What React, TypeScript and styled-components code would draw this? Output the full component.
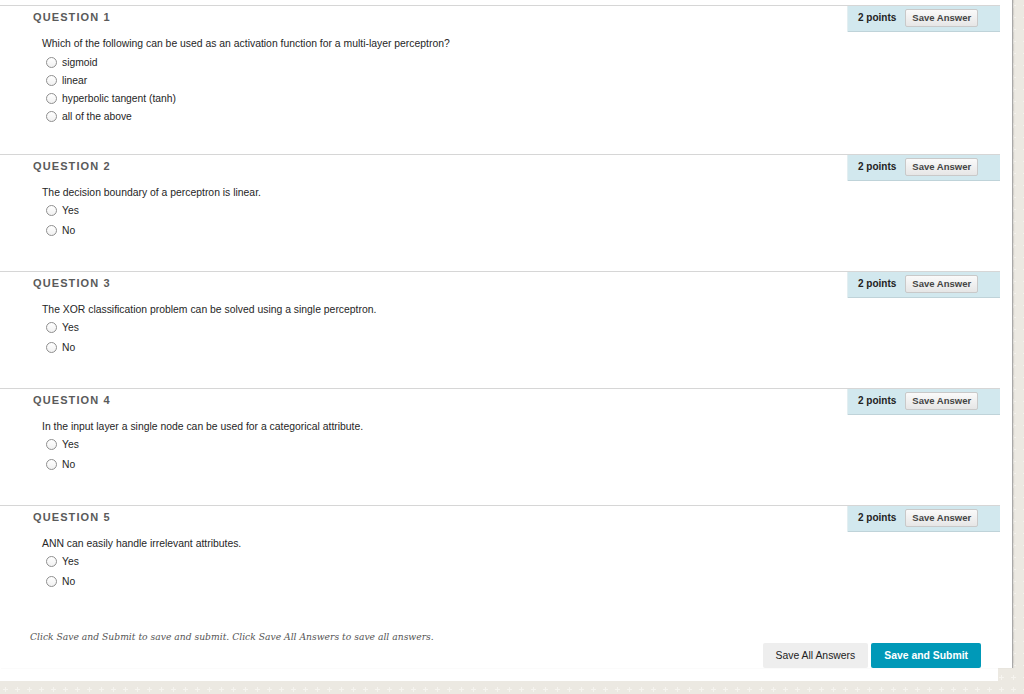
import styled, { createGlobalStyle } from 'styled-components';

const GlobalStyle = createGlobalStyle`
  html, body {
    margin: 0;
    padding: 0;
  }
  body {
    font-family: "Liberation Sans", Arial, sans-serif;
    background-color: #ece9e2;
    background-image:
      linear-gradient(180deg, #ece9e2 3px, transparent 3px, transparent 8px, #ece9e2 8px),
      linear-gradient(90deg, #ece9e2 3px, transparent 3px, transparent 8px, #ece9e2 8px),
      linear-gradient(90deg, transparent 5px, #f6f4ef 5px, #f6f4ef 6px, transparent 6px),
      linear-gradient(180deg, transparent 5px, #f6f4ef 5px, #f6f4ef 6px, transparent 6px);
    background-size: 12px 12px;
    min-height: 694px;
    overflow: hidden;
  }
`;

const Page = styled.div`
  width: 998px;
  background: #fff;
  padding-bottom: 13px;
`;

const Panel = styled.div`
  width: 1013px;
  height: 668px;
  box-sizing: border-box;
  background: #fff;
  border-right: 1px solid #a9a9a9;
  box-shadow: 1px 0 1px rgba(0, 0, 0, 0.1);
  padding-top: 5px;
`;

const Questions = styled.div`
  width: 1000px;
`;

const Block = styled.section<{ $height: number }>`
  height: ${(p) => p.$height}px;
  box-sizing: border-box;
  border-top: 1px solid #d6d6d6;
`;

const HeaderRow = styled.div`
  display: flex;
  align-items: stretch;
  justify-content: space-between;
  height: 26px;
`;

const Title = styled.h3`
  margin: 0;
  padding-left: 33px;
  font-size: 11px;
  font-weight: bold;
  letter-spacing: 1.1px;
  color: #5a5a5a;
  line-height: 22px;
`;

const PointsBox = styled.div`
  display: flex;
  align-items: center;
  gap: 9px;
  width: 152px;
  box-sizing: border-box;
  padding-left: 10px;
  background: #d2e8ee;
  border-bottom: 1px solid #bfd3d9;
  box-shadow: -1px 0 0 #e3eef1;
`;

const Points = styled.span`
  font-size: 10px;
  font-weight: bold;
  color: #222;
  margin-top: -3px;
`;

const SaveAnswerButton = styled.button`
  height: 18px;
  padding: 0 6px;
  margin-top: -2px;
  border: 1px solid #c9c9c9;
  border-radius: 2px;
  background: linear-gradient(#fafafa, #e6e6e6);
  font-family: "Liberation Sans", Arial, sans-serif;
  font-size: 9.5px;
  font-weight: bold;
  color: #444;
  cursor: pointer;
`;

const Body = styled.div`
  padding-left: 42px;
  padding-top: 3px;
`;

const Prompt = styled.p`
  margin: 0;
  font-size: 10.4px;
  line-height: 18px;
  color: #262626;
`;

const OptionList = styled.div<{ $row: number; $shift: number }>`
  display: flex;
  flex-direction: column;
  margin-top: ${(p) => p.$shift}px;
  & > label {
    height: ${(p) => p.$row}px;
  }
`;

const Option = styled.label`
  display: flex;
  align-items: center;
  gap: 5px;
  padding-left: 4px;
  font-size: 10.3px;
  color: #262626;
  cursor: pointer;
`;

const Radio = styled.span`
  width: 11px;
  height: 11px;
  border-radius: 50%;
  border: 1px solid #8f8f8f;
  background: linear-gradient(#fff, #f1f1f1);
  box-sizing: border-box;
`;

const Footer = styled.div`
  display: flex;
  flex-direction: column;
  padding-top: 8px;
`;

const Note = styled.p`
  margin: 0;
  padding-left: 30px;
  font-family: "DejaVu Serif", "Liberation Serif", Georgia, serif;
  font-style: italic;
  font-size: 9.2px;
  line-height: 14px;
  color: #555;
`;

const Actions = styled.div`
  display: flex;
  justify-content: flex-end;
  gap: 3px;
  width: 981px;
  margin-top: -1px;
`;

const ActionButton = styled.button<{ $primary?: boolean }>`
  height: 25px;
  border: none;
  border-radius: 2px;
  padding: 0 13px;
  font-family: "Liberation Sans", Arial, sans-serif;
  font-size: 10.4px;
  font-weight: ${(p) => (p.$primary ? 'bold' : 'normal')};
  background: ${(p) => (p.$primary ? '#0099b8' : '#eeeeee')};
  color: ${(p) => (p.$primary ? '#fff' : '#222')};
  cursor: pointer;
`;

type Question = {
  prompt: string;
  options: string[];
  height: number;
  row: number;
  shift: number;
};

const questions: Question[] = [
  {
    prompt: 'Which of the following can be used as an activation function for a multi-layer perceptron?',
    options: ['sigmoid', 'linear', 'hyperbolic tangent (tanh)', 'all of the above'],
    height: 149,
    row: 18,
    shift: 0,
  },
  {
    prompt: 'The decision boundary of a perceptron is linear.',
    options: ['Yes', 'No'],
    height: 117,
    row: 20,
    shift: -2,
  },
  {
    prompt: 'The XOR classification problem can be solved using a single perceptron.',
    options: ['Yes', 'No'],
    height: 117,
    row: 20,
    shift: -2,
  },
  {
    prompt: 'In the input layer a single node can be used for a categorical attribute.',
    options: ['Yes', 'No'],
    height: 117,
    row: 20,
    shift: -2,
  },
  {
    prompt: 'ANN can easily handle irrelevant attributes.',
    options: ['Yes', 'No'],
    height: 117,
    row: 20,
    shift: -2,
  },
];

const App = () => {
  return (
    <>
      <GlobalStyle />
      <Page>
        <Panel>
          <Questions>
            {questions.map((q, i) => (
              <Block key={i} $height={q.height}>
                <HeaderRow>
                  <Title>QUESTION {i + 1}</Title>
                  <PointsBox>
                    <Points>2 points</Points>
                    <SaveAnswerButton>Save Answer</SaveAnswerButton>
                  </PointsBox>
                </HeaderRow>
                <Body>
                  <Prompt>{q.prompt}</Prompt>
                  <OptionList $row={q.row} $shift={q.shift}>
                    {q.options.map((o) => (
                      <Option key={o}>
                        <Radio />
                        {o}
                      </Option>
                    ))}
                  </OptionList>
                </Body>
              </Block>
            ))}
          </Questions>
          <Footer>
            <Note>Click Save and Submit to save and submit. Click Save All Answers to save all answers.</Note>
            <Actions>
              <ActionButton>Save All Answers</ActionButton>
              <ActionButton $primary>Save and Submit</ActionButton>
            </Actions>
          </Footer>
        </Panel>
      </Page>
    </>
  );
};

export default App;
